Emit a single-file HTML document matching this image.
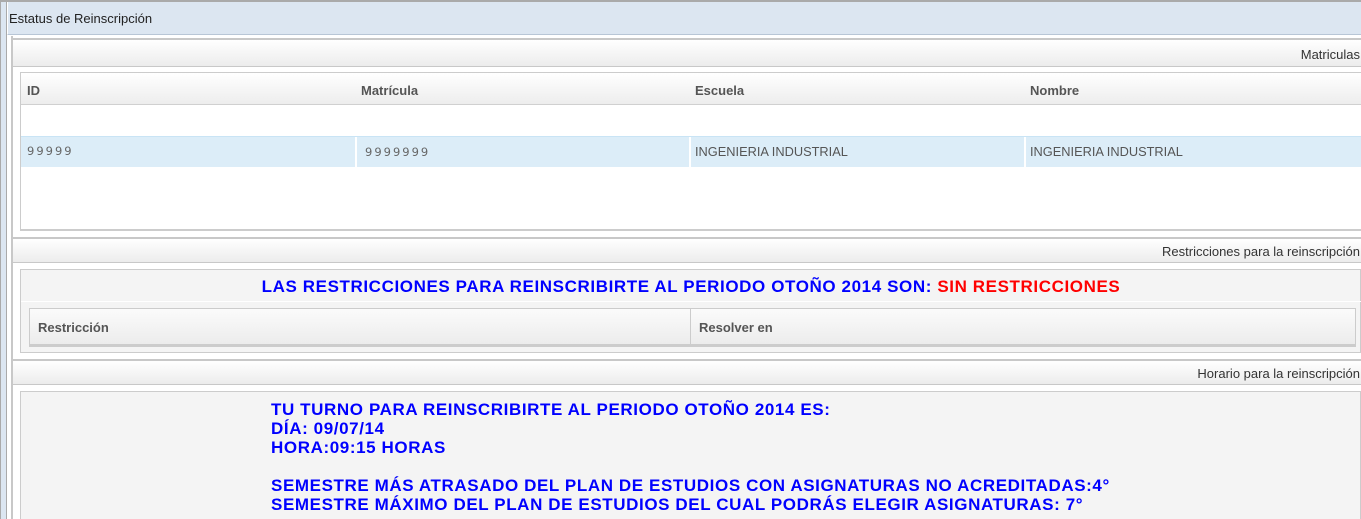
<!DOCTYPE html>
<html><head><meta charset="utf-8"><style>
*{margin:0;padding:0;box-sizing:border-box}
html,body{width:1361px;height:519px;overflow:hidden}
body{background:#fff;font-family:"Liberation Sans",Arial,sans-serif;font-size:13px;color:#333;position:relative}
.a{position:absolute}
.hdr{background:linear-gradient(#fff,#ececec);border-top:2px solid #c8c8c8;border-bottom:1px solid #c8c8c8;text-align:right;padding-right:1px;color:#333;white-space:nowrap}
.th{font-weight:bold;color:#555;position:absolute;top:10px}
.blue{color:#0000ff;font-weight:bold;font-size:17px;letter-spacing:0.6px;white-space:nowrap}
.num{font-family:"DejaVu Sans",sans-serif;font-size:11.5px;color:#666;letter-spacing:2px}
</style></head><body>
<div class="a" style="left:0;top:0;width:7px;height:519px;background:#dce6f1;border-left:1px solid #aaa;border-right:1px solid #aaa"></div>
<div class="a" style="left:0;top:0;width:1361px;height:2px;background:#aaa"></div>
<div class="a" style="left:7px;top:2px;width:1354px;height:33px;background:#dce6f1;border-left:1px solid #fff;border-bottom:1px solid #b8c6d6;padding:9px 0 0 1px;color:#222">Estatus de Reinscripción</div>
<div class="a" style="left:11px;top:36px;width:2px;height:483px;background:#c8c8c8"></div>

<div class="a hdr" style="left:13px;top:38px;width:1348px;height:29px;padding-top:7px">Matriculas</div>
<div class="a" style="left:20px;top:72px;width:1341px;height:159px;border:1px solid #ccc;border-right:none;border-bottom:2px solid #ccc">
 <div class="a" style="left:0;top:0;width:1340px;height:32px;background:linear-gradient(#fff,#ededed);border-bottom:1px solid #d0d0d0">
  <span class="th" style="left:6px">ID</span><span class="th" style="left:340px">Matrícula</span><span class="th" style="left:674px">Escuela</span><span class="th" style="left:1009px">Nombre</span>
 </div>
 <div class="a" style="left:0;top:63px;width:1340px;height:31px;background:#dcedf8;border-top:1px solid #c9e4f5;color:#555;font-size:12.8px">
  <span class="a num" style="left:6px;top:7px">99999</span>
  <span class="a" style="left:334px;top:0;width:2px;height:30px;background:#fff"></span>
  <span class="a num" style="left:344px;top:8px">9999999</span>
  <span class="a" style="left:668px;top:0;width:2px;height:30px;background:#fff"></span>
  <span class="a" style="left:674px;top:7px">INGENIERIA INDUSTRIAL</span>
  <span class="a" style="left:1003px;top:0;width:2px;height:30px;background:#fff"></span>
  <span class="a" style="left:1009px;top:7px">INGENIERIA INDUSTRIAL</span>
 </div>
</div>

<div class="a hdr" style="left:13px;top:237px;width:1348px;height:26px;padding-top:5px">Restricciones para la reinscripción</div>
<div class="a" style="left:20px;top:269px;width:1341px;height:84px;border:1px solid #ccc;background:#f4f4f4">
 <div class="a blue" style="left:0;top:7px;width:1340px;text-align:center">LAS RESTRICCIONES PARA REINSCRIBIRTE AL PERIODO OTOÑO 2014 SON: <span style="color:#ff0000">SIN RESTRICCIONES</span></div>
 <div class="a" style="left:0;top:31px;width:1340px;height:1px;background:#fff"></div>
 <div class="a" style="left:8px;top:38px;width:1327px;height:39px;border:1px solid #ccc;border-bottom:3px solid #ccc;background:linear-gradient(#fbfbfb,#ececec)">
  <span class="th" style="left:8px;top:11px">Restricción</span>
  <span class="a" style="left:660px;top:0;width:1px;height:36px;background:#ccc"></span>
  <span class="th" style="left:669px;top:11px">Resolver en</span>
 </div>
</div>

<div class="a hdr" style="left:13px;top:359px;width:1348px;height:26px;padding-top:5px">Horario para la reinscripción</div>
<div class="a" style="left:20px;top:391px;width:1341px;height:140px;border:1px solid #ccc;background:#f4f4f4">
 <div class="a blue" style="left:250px;top:8px;line-height:19px">TU TURNO PARA REINSCRIBIRTE AL PERIODO OTOÑO 2014 ES:<br>DÍA: 09/07/14<br>HORA:09:15 HORAS<br><br>SEMESTRE MÁS ATRASADO DEL PLAN DE ESTUDIOS CON ASIGNATURAS NO ACREDITADAS:4°<br>SEMESTRE MÁXIMO DEL PLAN DE ESTUDIOS DEL CUAL PODRÁS ELEGIR ASIGNATURAS: 7°</div>
</div>
</body></html>
